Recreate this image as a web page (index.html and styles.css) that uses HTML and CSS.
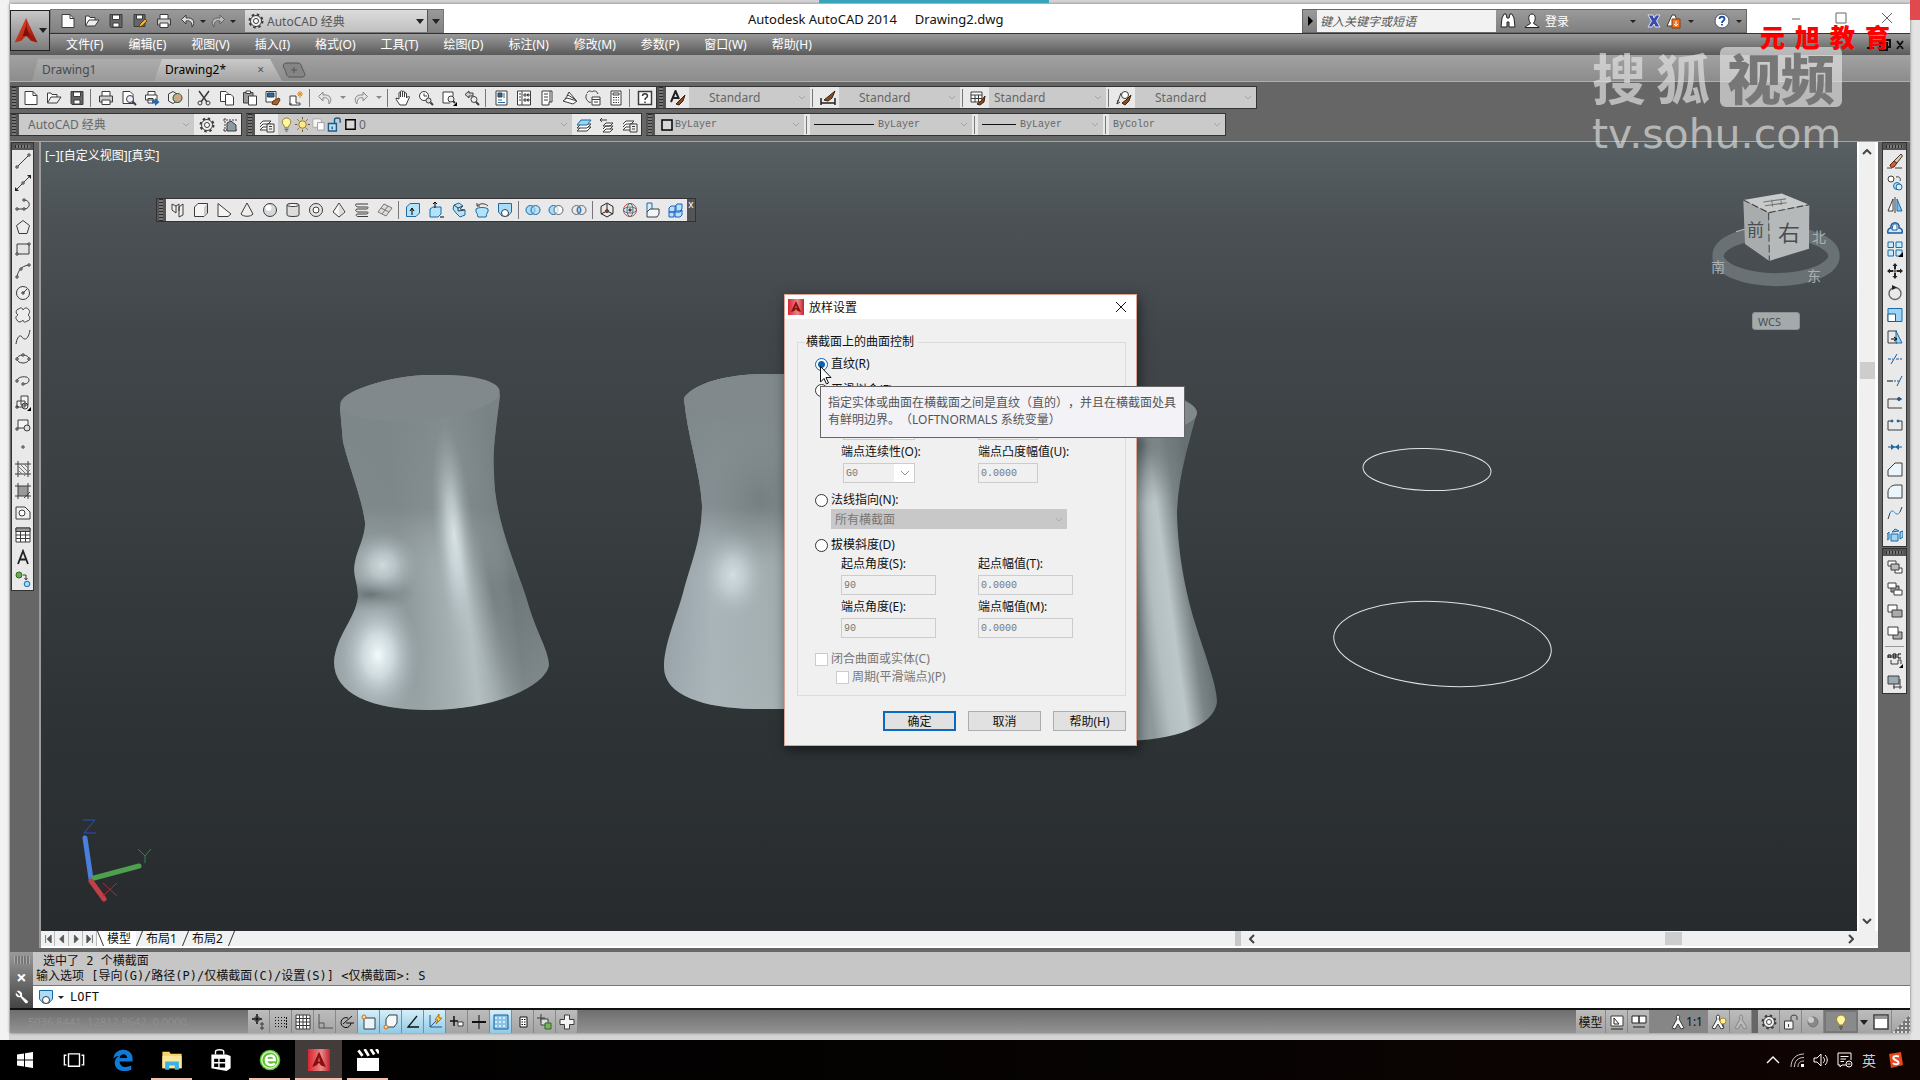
FILE: index.html
```
<!DOCTYPE html>
<html lang="zh-CN">

<head>
    <meta charset="UTF-8">
    <meta name="viewport" content="width=device-width, initial-scale=1.0">
    <title>Autodesk AutoCAD 2014 - Drawing2.dwg</title>
    <link rel="stylesheet" href="styles.css">
</head>

<body>
    <!-- icon sprite, all on a 16px grid -->
    <svg class="sprite" aria-hidden="true">
        <defs>
            <linearGradient id="gRed" x1="0" y1="0" x2="1" y2="1"><stop offset="0" stop-color="#f2502f"/><stop offset="1" stop-color="#8c1208"/></linearGradient>
            <linearGradient id="gTile" x1="0" y1="0" x2="1" y2="0"><stop offset="0" stop-color="#d9232e"/><stop offset=".6" stop-color="#e8898c"/><stop offset="1" stop-color="#c4202a"/></linearGradient>
        </defs>
        <symbol id="acad" viewBox="0 0 16 16"><path d="M8 0 15 15 11 14 8 11 5 14 1 15Z" fill="url(#gRed)" stroke="none"/><path d="M8 0 9 8 15 15 11 13 8 10Z" fill="#a0150c" stroke="none"/><path d="M6 11 8 5 10 11Z" fill="#7c0f08" stroke="none"/></symbol>
        <symbol id="acadTile" viewBox="0 0 16 16"><path d="M0 0H16V16H0Z" fill="url(#gTile)" stroke="none"/><path d="M8 2 13 13 9.500 12 8 10 6 12 3 13Z" fill="#8c0e0c" stroke="none"/><path d="M7 9 8 6 9 9Z" fill="#c86060" stroke="none"/></symbol>
        <symbol id="new" viewBox="0 0 16 16"><path d="M2 1.500H10L14 5.500V14.500H2Z" fill="#fff"/><path d="M10 1.500V5.500H14"/></symbol>
        <symbol id="open" viewBox="0 0 16 16"><path d="M1.500 13V3H5L6 4.500H11V7" fill="#fff"/><path d="M1.500 13 5 7H15L11 13Z" fill="#eee"/></symbol>
        <symbol id="save" viewBox="0 0 16 16"><path d="M2 1.500H14V14.500H3L2 13.500Z" fill="#666"/><path d="M4.500 2H11.500V6.500H4.500ZM5 10H11V14H5Z" fill="#fff"/></symbol>
        <symbol id="saveas" viewBox="0 0 16 16"><path d="M2 1.500H13V13.500H2Z" fill="#666"/><path d="M4.500 2H10.500V6H4.500Z" fill="#fff"/><path d="M7 14 8 11 13 6 15 8 10 13Z" fill="#f0b030" stroke="#704010"/></symbol>
        <symbol id="print" viewBox="0 0 16 16"><path d="M4 6V1.500H12V6" fill="#fff"/><path d="M1.500 6H14.500V12H1.500Z" fill="#ccc"/><path d="M4 10H12V14.500H4Z" fill="#fff"/></symbol>
        <symbol id="preview" viewBox="0 0 16 16"><path d="M2 1.500H9L12 4.500V13.500H2Z" fill="#fff"/><circle cx="9" cy="9" r="3.500" fill="#eef"/><path d="M11.500 11.500 15 15" stroke-width="2"/></symbol>
        <symbol id="publish" viewBox="0 0 16 16"><path d="M4 5V1.500H11V5M1.500 5H13V10H1.500ZM4 8.500H9V13H4Z" fill="#fff"/><path d="M8 10.500H11V8L15.500 12 11 16V13.500H8Z" fill="#2668b0" stroke="none"/></symbol>
        <symbol id="dwf" viewBox="0 0 16 16"><path d="M1.500 4 6 1.500 10 4V11L6 13.500 1.500 11Z" fill="#eee"/><circle cx="10.500" cy="8" r="4.500" fill="#a4bc7c"/><path d="M10 4C15 4 15 8 13 11L9 9Z" fill="#d8a088" stroke="none"/></symbol>
        <symbol id="cut" viewBox="0 0 16 16"><path d="M3 1 11 12M13 1 5 12" stroke-width="1.500"/><circle cx="4" cy="13" r="2"/><circle cx="12" cy="13" r="2"/></symbol>
        <symbol id="copy" viewBox="0 0 16 16"><path d="M1.500 1.500H7L9 3.500V11.500H1.500Z" fill="#fff"/><path d="M6.500 4.500H12L14.500 7V15H6.500Z" fill="#fff"/></symbol>
        <symbol id="paste" viewBox="0 0 16 16"><path d="M1.500 2.500H11V13H1.500Z" fill="#999"/><path d="M4 1H8.500V3.500H4Z" fill="#fff"/><path d="M6.500 6H14.500V15H6.500Z" fill="#fff"/></symbol>
        <symbol id="match" viewBox="0 0 16 16"><path d="M1 1.500H11V12H1Z" fill="#fff"/><path d="M2.500 3H9V7H2.500Z" fill="#246aa8"/><path d="M8 11 14 8 15 10 12 15 7 14Z" fill="#a8642c" stroke="#603010"/></symbol>
        <symbol id="block" viewBox="0 0 16 16"><path d="M2 6H8V13H12V15H2ZM1 14H4" fill="#fff"/><path d="M12 1V8M9 4H15M10 2 14 6M14 2 10 6" stroke="#e08a20"/></symbol>
        <symbol id="undo" viewBox="0 0 16 16"><path d="M6 2 1.500 6.500 6 11V8C10 7 12 9 12 14C16 9 13 4 6 5Z" fill="#ddd"/></symbol>
        <symbol id="redo" viewBox="0 0 16 16"><path d="M10 2 14.500 6.500 10 11V8C6 7 4 9 4 14C0 9 3 4 10 5Z" fill="#ddd"/></symbol>
        <symbol id="pan" viewBox="0 0 16 16"><path d="M5 15C3 12 1 10 1 8L4 9V3C4 2 5.500 2 5.500 3V7 1.500C5.500.500 7.500.500 7.500 1.500V7 2C7.500 1 9.500 1 9.500 2V7 3.500C10 2.500 11.500 2.500 11.500 4V8L13.500 6 14.500 7 11 15Z" fill="#fff"/></symbol>
        <symbol id="zoomrt" viewBox="0 0 16 16"><circle cx="6" cy="6" r="4.500" fill="#fff"/><path d="M6 3.500V6H9"/><circle cx="10.500" cy="10.500" r="2.500" fill="#dde"/><path d="M12.500 12.500 15 15" stroke-width="2"/></symbol>
        <symbol id="zoomwin" viewBox="0 0 16 16"><path d="M9 13H2V2H12V6" fill="#fff"/><circle cx="10" cy="9" r="3" fill="#eee"/><path d="M12 11 14 13" stroke-width="2"/><path d="M16 16H12L16 12Z" fill="#000" stroke="none"/></symbol>
        <symbol id="zoomprev" viewBox="0 0 16 16"><path d="M5 1 1 4.500 5 8V6H9V3H5Z" fill="#ccc"/><circle cx="10" cy="9.500" r="3" fill="#eee"/><path d="M12 12 15 15" stroke-width="2"/></symbol>
        <symbol id="props" viewBox="0 0 16 16"><path d="M3 1H14V15H3Z" fill="#fff"/><path d="M5 3H9V7H5Z" fill="#246aa8"/><path d="M11 3V8M5 10H9M5 12.500H12" stroke="#246aa8"/></symbol>
        <symbol id="dc" viewBox="0 0 16 16"><path d="M1.500 1H14.500V15H1.500ZM6 1V15" fill="#fff"/><path d="M3 4H5M3 7H5M3 10H5M8 4H10V6H8ZM11.500 4H13V6H11.500ZM8 9H10V11H8ZM11.500 9H13V11H11.500Z"/></symbol>
        <symbol id="palette" viewBox="0 0 16 16"><path d="M3 1H13V12H10V15H3Z" fill="#fff"/><path d="M5 4H9M5 7H9M5 10H9M11 1V12"/></symbol>
        <symbol id="sheet" viewBox="0 0 16 16"><path d="M1 11 5 8 15 11 11 14ZM3 9 6 5 14 10M5 6 7 2 13 9" fill="#fff"/></symbol>
        <symbol id="markup" viewBox="0 0 16 16"><path d="M2 3C4 0 6 1 7 2 9 0 12 1 13 4M2 4C0 6 1 10 3 11 3 12 5 13 6 12"/><path d="M7 7H15V15H7ZM7 9.500H15M9 12H13" fill="#fff"/></symbol>
        <symbol id="calc" viewBox="0 0 16 16"><path d="M3 1H13V15H3Z" fill="#fff"/><path d="M5 3H11V5H5Z"/><path d="M5 7.500H11M5 10H11M5 12.500H11" stroke-dasharray="1.500 1"/></symbol>
        <symbol id="help" viewBox="0 0 16 16"><path d="M1.500 1.500H14.500V14.500H1.500Z" fill="#fff" stroke-width="1.500"/><path d="M5.500 6C5.500 3 10.500 3 10.500 6 10.500 8 8 7.500 8 10M8 11.500V13" stroke-width="1.500"/></symbol>
        <symbol id="gear" viewBox="0 0 16 16"><circle cx="8" cy="8" r="5.500" fill="#eee"/><circle cx="8" cy="8" r="6.500" stroke-width="2" stroke-dasharray="2.500 2.600"/><circle cx="8" cy="8" r="2.500" fill="#fff"/></symbol>
        <symbol id="wsave" viewBox="0 0 16 16"><path d="M1 3H15M3 1V15M1 13H15" stroke-dasharray="2 1"/><path d="M5 14V6L9 4 14 8V14Z" fill="#8a9aa0"/></symbol>
        <symbol id="layers" viewBox="0 0 16 16"><path d="M1 13 4 10H12L9 13ZM1 10 4 7H12M1 7 4 4H12L9 7" fill="#fff"/><path d="M8 7H15V15H8ZM10 9.500H13M10 12H13" fill="#eee"/></symbol>
        <symbol id="layerblue" viewBox="0 0 16 16"><path d="M1 14 5 10H15L11 14Z" fill="#fff"/><path d="M1 11 5 7H15L11 11Z" fill="#fff"/><path d="M1 8 5 3H15L11 8Z" fill="#9cd4f4" stroke="#1b6aa5"/></symbol>
        <symbol id="layerprev" viewBox="0 0 16 16"><path d="M4 15 7 12H14L11 15ZM4 12 7 9H14L11 12M4 9 7 6H14L11 9Z" fill="#fff"/><path d="M1 3H8M3 1 1 3 3 5"/></symbol>
        <symbol id="bulb" viewBox="0 0 16 16"><path d="M6 11C6 9 3.500 8 3.500 5.500A4.500 4.500 0 0 1 12.500 5.500C12.500 8 10 9 10 11Z" fill="#fff6a0" stroke="#907c30"/><path d="M6 13H10M7 15H9"/></symbol>
        <symbol id="sun" viewBox="0 0 16 16"><circle cx="8" cy="8" r="4" fill="#ffe888" stroke="#907030"/><path d="M8 0V2.500M8 13.500V16M0 8H2.500M13.500 8H16M2.500 2.500 4 4M12 12 13.500 13.500M13.500 2.500 12 4M4 12 2.500 13.500" stroke="#705820"/></symbol>
        <symbol id="vpfreeze" viewBox="0 0 16 16"><path d="M2 2H11V11H2Z" fill="#f4f4f4" stroke="#aaa"/><path d="M7 6H14V14H7Z" fill="#fff" stroke="#999"/></symbol>
        <symbol id="unlock" viewBox="0 0 16 16"><path d="M1.500 7H10V15H1.500Z" fill="#b4e0fa" stroke="#1b5a8a" stroke-width="1.500"/><path d="M8 7V3C8 .500 14 .500 14 3V6M5.500 10V13" stroke="#1b5a8a" stroke-width="1.500"/></symbol>
        <symbol id="lock" viewBox="0 0 16 16"><path d="M1.500 7H10V15H1.500Z" fill="#f4f4f4"/><path d="M8 7V3C8 .500 14 .500 14 3V6M5.500 10V13"/></symbol>
        <symbol id="swatch" viewBox="0 0 16 16"><path d="M3 3H13V13H3Z" fill="#d8d8d8" stroke="#000" stroke-width="1.500"/></symbol>
        <symbol id="textstyle" viewBox="0 0 16 16"><path d="M1 12 5.500 1 9 9M3 8H8" stroke="#222" stroke-width="2"/><path d="M6 14 10 10 15 5 13 11 9 15Z" fill="#8a4a1c" stroke="#402008"/></symbol>
        <symbol id="dimstyle" viewBox="0 0 16 16"><path d="M1 8V15M15 8V15M1 13H15" stroke="#222" stroke-width="1.500"/><path d="M4 10 9 6 15 1 12 8 8 11Z" fill="#8a4a1c" stroke="#402008"/></symbol>
        <symbol id="tabstyle" viewBox="0 0 16 16"><path d="M1 2H12V12H1ZM1 5H12M1 8.500H12M5 5V12M8.500 5V12" fill="#fff"/><path d="M7 14 11 11 15 6 14 12 10 15Z" fill="#8a4a1c" stroke="#402008"/></symbol>
        <symbol id="mlstyle" viewBox="0 0 16 16"><path d="M1 14 5 3M1 14 2 10M1 14 4 12"/><circle cx="9" cy="5" r="3.500" fill="#fff"/><path d="M6 13 10 10 15 5 13 11 9 15Z" fill="#8a4a1c" stroke="#402008"/></symbol>
        <!-- draw -->
        <symbol id="line" viewBox="0 0 16 16"><path d="M2 14 14 2"/><path d="M1 13H3V15H1ZM13 1H15V3H13Z" fill="#fff"/></symbol>
        <symbol id="xline" viewBox="0 0 16 16"><path d="M1 15 15 1"/><path d="M0 16V12L4 16ZM16 0V4L12 0Z" fill="#222" stroke="none"/><path d="M7 7H9V9H7Z" fill="#fff"/></symbol>
        <symbol id="pline" viewBox="0 0 16 16"><path d="M2 12H9C16 12 16 3 9 3"/><path d="M1 11H3V13H1ZM8 11H10V13H8ZM8 2H10V4H8Z" fill="#fff"/></symbol>
        <symbol id="polygon" viewBox="0 0 16 16"><path d="M8 1.500 14.500 6.500 12 14.500H4L1.500 6.500Z" fill="#ececec"/></symbol>
        <symbol id="rect" viewBox="0 0 16 16"><path d="M2 3H14V13H2Z" fill="#e4e4e4"/><path d="M1 12H3V14H1ZM13 2H15V4H13Z" fill="#fff"/></symbol>
        <symbol id="arc" viewBox="0 0 16 16"><path d="M2 14C3 8 6 3 14 2"/><path d="M1 13H3V15H1ZM5 5H7V7H5ZM13 1H15V3H13Z" fill="#fff"/></symbol>
        <symbol id="circle" viewBox="0 0 16 16"><circle cx="8" cy="8" r="6.500" fill="#eee"/><path d="M8 8 12 4M7 7H9V9H7Z"/></symbol>
        <symbol id="revcloud" viewBox="0 0 16 16"><path d="M3 8C0 6 1 2 4 2 5 0 8 1 8 3 9 1 12 0 13 2 16 4 14 7 13 8 16 10 15 14 12 14 10 16 8 15 8 13 7 15 3 16 2 13 0 11 1 9 3 8Z" fill="#eee"/></symbol>
        <symbol id="spline" viewBox="0 0 16 16"><path d="M1 15C2 8 5 5 7 8S13 12 15 1"/></symbol>
        <symbol id="ellipse" viewBox="0 0 16 16"><ellipse cx="8" cy="8" rx="6" ry="4"/><path d="M1 7H3V9H1ZM13 7H15V9H13ZM7 3H9V5H7Z" fill="#fff"/></symbol>
        <symbol id="earc" viewBox="0 0 16 16"><path d="M2 8C2 3 14 2 14 7 14 10 11 11 8 11"/><path d="M1 7H3V9H1ZM7 10H9V12H7Z" fill="#fff"/></symbol>
        <symbol id="insert" viewBox="0 0 16 16"><path d="M6 1H13V10H6ZM2 6H10V12H2Z" fill="#f4f4f4"/><circle cx="10" cy="11" r="3"/><path d="M1 11H3V13H1Z"/><path d="M16 16H12L16 12Z" fill="#000" stroke="none"/></symbol>
        <symbol id="mkblock" viewBox="0 0 16 16"><path d="M3 3H13V11H3Z" fill="#f4f4f4"/><circle cx="12" cy="11" r="3" fill="#ddd"/><path d="M1 11H3V13H1Z"/></symbol>
        <symbol id="point" viewBox="0 0 16 16"><path d="M7 7H9V9H7Z" fill="#fff"/></symbol>
        <symbol id="hatch" viewBox="0 0 16 16"><path d="M3 0V16M13 0V16M0 3H16M0 13H16"/><path d="M3 5 11 13M3 9 7 13M5 3 13 11M9 3 13 7M9 15 15 9" stroke="#777"/></symbol>
        <symbol id="gradient" viewBox="0 0 16 16"><path d="M3 3H13V13H3Z" fill="#999" stroke="none"/><path d="M3 0V16M13 0V16M0 3H16M0 13H16M9 15 15 9"/></symbol>
        <symbol id="region" viewBox="0 0 16 16"><path d="M1 2H10L15 7V14H1Z" fill="#f0f0f0"/><circle cx="7" cy="8" r="3" fill="#fff"/></symbol>
        <symbol id="table" viewBox="0 0 16 16"><path d="M1 1H15V15H1ZM1 8H15M1 11.500H15M5.500 4.500V15M10.500 4.500V15" fill="#fff"/><path d="M1 1H15V4.500H1Z" fill="#999"/></symbol>
        <symbol id="mtext" viewBox="0 0 16 16"><path d="M3 15 8 2 13 15M5 10.500H11" stroke="#222" stroke-width="1.800"/></symbol>
        <symbol id="addsel" viewBox="0 0 16 16"><circle cx="4" cy="4" r="3" fill="#6cae4c" stroke="#2c6a24"/><circle cx="12" cy="13" r="2.800" fill="#9cdcfc" stroke="#1b6aa5"/><path d="M8 4H11V8M9.500 7 11 9 12.500 7"/></symbol>
        <!-- modelling -->
        <symbol id="polysolid" viewBox="0 0 16 16"><path d="M2 2 6 4V11L2 8ZM6 4 9 2V9M9 5 13 2V13L9 15Z" fill="#eee"/></symbol>
        <symbol id="box" viewBox="0 0 16 16"><path d="M1.500 5 5 1.500H14.500V11L11 14.500H1.500Z" fill="#f4f4f4"/><path d="M14 2 11 5V14L14 11Z" fill="#ccc" stroke="none"/></symbol>
        <symbol id="wedge" viewBox="0 0 16 16"><path d="M2 1.500 15 12 12 14.500H2Z" fill="#f4f4f4"/></symbol>
        <symbol id="cone" viewBox="0 0 16 16"><path d="M8 1 14 12C12 15 4 15 2 12Z" fill="#eee"/></symbol>
        <symbol id="sphere" viewBox="0 0 16 16"><circle cx="8" cy="8" r="6.500" fill="#d4d8d8"/><circle cx="6.500" cy="6" r="3" fill="#fff" stroke="none"/></symbol>
        <symbol id="cyl" viewBox="0 0 16 16"><path d="M2 3C2 1 14 1 14 3V13C14 15 2 15 2 13Z" fill="#ddd"/><ellipse cx="8" cy="3" rx="6" ry="1.500" fill="#fff"/></symbol>
        <symbol id="torus" viewBox="0 0 16 16"><circle cx="8" cy="8" r="6.500" fill="#e4e4e4"/><circle cx="8" cy="8" r="3" fill="#fff"/></symbol>
        <symbol id="pyramid" viewBox="0 0 16 16"><path d="M8 1 14 10 8 15 2 10Z" fill="#f8f8f8"/><path d="M8 2 13 10 8 14Z" fill="#ddd" stroke="none"/></symbol>
        <symbol id="helix" viewBox="0 0 16 16"><path d="M14 2H3C0 2 2 5 4 5H12C16 5 14 7 12 7H4C0 7 2 10 4 10H12C16 10 14 12 12 12H4C1 12 2 14.500 4 14.500H14"/></symbol>
        <symbol id="planar" viewBox="0 0 16 16"><path d="M1 10 7 2 15 6 9 14ZM4 6 12 10M11 4 5 12" fill="#ddd" stroke="#777"/></symbol>
        <symbol id="extrude" viewBox="0 0 16 16"><path d="M1.500 5 5 1.500H14.500V11L11 14.500H1.500Z" fill="#b4e2f8" stroke="#1b6aa5"/><path d="M7 13V7M5 9 7 6 9 9" stroke="#000"/></symbol>
        <symbol id="presspull" viewBox="0 0 16 16"><path d="M2 7 5 5H13V12L10 15H2Z" fill="#b4e2f8" stroke="#1b6aa5"/><path d="M7 6V0M5 2 7 0 9 2M12 15H16" stroke="#000"/></symbol>
        <symbol id="sweep" viewBox="0 0 16 16"><path d="M3 3 8 1 12 4 9 7 14 8V13L9 15 5 11 2 7Z" fill="#b4e2f8" stroke="#1b6aa5"/><path d="M3 3 7 6 12 4M7 6V9L14 8"/></symbol>
        <symbol id="revolve" viewBox="0 0 16 16"><path d="M2 7C4 5 12 5 14 7V10C12 11 13 14 12 15H4C3 14 4 11 2 10Z" fill="#b4e2f8" stroke="#1b6aa5"/><path d="M3 4C6 1 11 1 14 4M3 1V4H6"/></symbol>
        <symbol id="loft" viewBox="0 0 16 16"><path d="M1.500 1.500H14.500V10L11 14H5L1.500 10Z" fill="#a8dcf8" stroke="#1b6aa5"/><circle cx="8" cy="11" r="3.500" fill="#fff"/></symbol>
        <symbol id="union" viewBox="0 0 16 16"><circle cx="5.500" cy="8" r="4.500" fill="#a8dcf8" stroke="#1b6aa5"/><circle cx="10.500" cy="8" r="4.500" fill="#a8dcf8" stroke="#1b6aa5" fill-opacity=".6"/></symbol>
        <symbol id="subtract" viewBox="0 0 16 16"><circle cx="5.500" cy="8" r="4.500" fill="#a8dcf8" stroke="#1b6aa5"/><circle cx="10.500" cy="8" r="4.500" fill="#fff" stroke="#666" fill-opacity=".7"/></symbol>
        <symbol id="intersect" viewBox="0 0 16 16"><circle cx="5.500" cy="8" r="4.500" stroke="#667"/><circle cx="10.500" cy="8" r="4.500" stroke="#667"/><path d="M8 4.500C10 7 10 9 8 11.500 6 9 6 7 8 4.500Z" fill="#a8dcf8" stroke="#1b6aa5"/></symbol>
        <symbol id="orbit3d" viewBox="0 0 16 16"><path d="M8 1 14 4.500V11.500L8 15 2 11.500V4.500Z" stroke="#222"/><path d="M8 2V9L2 12M8 9 14 12" stroke="#222"/><circle cx="8" cy="9" r="1.500" fill="#d03020"/></symbol>
        <symbol id="rot3d" viewBox="0 0 16 16"><circle cx="8" cy="8" r="6.500" stroke="#c04040"/><ellipse cx="8" cy="8" rx="3" ry="6.500" stroke="#3a7a5a"/><ellipse cx="8" cy="8" rx="6.500" ry="3" stroke="#5a6aa0"/><path d="M7 7H9V9H7Z" fill="#d03020"/></symbol>
        <symbol id="align3d" viewBox="0 0 16 16"><path d="M2 1H7V10H2Z" fill="#d4ecf8" stroke="#1b6aa5"/><path d="M2 10 5 7H14V12L12 15H2Z" fill="#eef6fa"/></symbol>
        <symbol id="array3d" viewBox="0 0 16 16"><path d="M1 6 3 4H8V8L6 10H1ZM7 5 9 2H14V7L12 9H7ZM1 12V10H6V15H1ZM7 10H12L14 8V13L12 15H7Z" fill="#b4e2f8" stroke="#1e5fc0"/></symbol>
        <!-- modify -->
        <symbol id="erase" viewBox="0 0 16 16"><path d="M3 12 7 8 10 10 7 14C5 15 3 14 3 12Z" fill="#c8603c" stroke="#602010"/><path d="M7 8 14 1 15.500 3 10 10Z" fill="#e8c890"/><path d="M0 15H5M8 15H15"/></symbol>
        <symbol id="cp" viewBox="0 0 16 16"><circle cx="4" cy="4" r="3" fill="#fff"/><circle cx="10" cy="11" r="3.500" fill="#b4e2f8" stroke="#1b6aa5"/><circle cx="12" cy="12" r="3" fill="#d4f0fc" stroke="#1b6aa5"/><path d="M9 2C13 1 14 4 13 6"/></symbol>
        <symbol id="mirror" viewBox="0 0 16 16"><path d="M6 2V14H1Z" fill="#fff"/><path d="M10 2V14H15Z" fill="#7cc4f0" stroke="#1b6aa5"/><path d="M8 0V16"/></symbol>
        <symbol id="offset" viewBox="0 0 16 16"><path d="M1 14C0 10 3 9 4 9 3 2 13 2 12 9 14 9 16 11 15 14Z" fill="#cceafa" stroke="#1b5a9a" stroke-width="1.500"/><path d="M5 11C6 6 6 5 8 5S10 7 10 11Z" fill="#fff" stroke="#1b5a9a"/></symbol>
        <symbol id="array" viewBox="0 0 16 16"><path d="M1 1H6.500V6.500H1ZM9 1H15V6.500H9ZM1 9H6.500V15H1ZM9 9H15V15H9Z" fill="#cceafa" stroke="#1b6aa5"/><path d="M16 16H11L16 11Z" fill="#000" stroke="none"/></symbol>
        <symbol id="move" viewBox="0 0 16 16"><path d="M8 0 10.500 3H5.500ZM8 16 10.500 13H5.500ZM0 8 3 5.500V10.500ZM16 8 13 5.500V10.500Z" fill="#222" stroke="none"/><path d="M8 3V6M8 10V13M3 8H6M10 8H13" stroke="#222" stroke-width="2"/><path d="M7 7H9V9H7Z"/></symbol>
        <symbol id="rotate" viewBox="0 0 16 16"><circle cx="8" cy="8.500" r="6" stroke="#666" stroke-width="1.400"/><path d="M5 0 10 2.500 5 5Z" fill="#222" stroke="none"/></symbol>
        <symbol id="scale" viewBox="0 0 16 16"><path d="M1 1.500H15V14.500H1Z" fill="#9cd4f4" stroke="#1b6aa5"/><path d="M1 7H8.500V14.500H1Z" fill="#fff" stroke="#1b5a8a"/></symbol>
        <symbol id="stretch" viewBox="0 0 16 16"><path d="M9 2 15 14H9Z" fill="#9cd4f4" stroke="#1b6aa5"/><path d="M10 2H1V14H10"/><path d="M4 10H9M7 8 10 10 7 12" stroke="#000"/></symbol>
        <symbol id="trim" viewBox="0 0 16 16"><path d="M1 8H6M9 8H15" stroke="#1b5a9a" stroke-dasharray="3 1"/><path d="M4 13 10 3" stroke="#1b5a9a"/></symbol>
        <symbol id="extend" viewBox="0 0 16 16"><path d="M0 8H6" stroke="#111"/><path d="M7 8H12" stroke="#1b5a9a" stroke-dasharray="2 1"/><path d="M10 13 15 3" stroke="#1b5a9a"/></symbol>
        <symbol id="breakpt" viewBox="0 0 16 16"><path d="M15 13H1V4H15"/><circle cx="12" cy="4" r="1.500" fill="#1b5a9a" stroke="#1b5a9a"/></symbol>
        <symbol id="brk" viewBox="0 0 16 16"><path d="M4 4H1V13H15V4H12"/><circle cx="5" cy="4" r="1" fill="#1b5a9a" stroke="#1b5a9a"/><circle cx="11" cy="4" r="1" fill="#1b5a9a" stroke="#1b5a9a"/></symbol>
        <symbol id="join" viewBox="0 0 16 16"><path d="M1 8H15" stroke="#1b5a9a"/><path d="M4 5 8 8 4 11ZM12 5 8 8 12 11Z" fill="#1b6aa5" stroke="none"/></symbol>
        <symbol id="chamfer" viewBox="0 0 16 16"><path d="M1 15V9L8 2H15V15Z" fill="#eaf6fc"/></symbol>
        <symbol id="fillet" viewBox="0 0 16 16"><path d="M1 15V9C1 5 5 2 9 2H15V15Z" fill="#eaf6fc"/></symbol>
        <symbol id="blend" viewBox="0 0 16 16"><path d="M1 14 3 8M13 7 15 2"/><path d="M3 8C6 1 9 14 13 7" stroke="#2b8ad0"/></symbol>
        <symbol id="explode" viewBox="0 0 16 16"><path d="M4 7H11V14H4ZM5 5 8 2 12 4ZM13 5 16 4V10L13 12ZM0 7 2 5V12L0 13Z" fill="#9cd4f4" stroke="#1b6aa5"/></symbol>
        <symbol id="front" viewBox="0 0 16 16"><path d="M1 2H9V7H1ZM8 9H15V14H8Z" fill="#fff"/><path d="M4 5H12V11H4Z" fill="#bbb"/></symbol>
        <symbol id="back" viewBox="0 0 16 16"><path d="M4 5H12V11H4Z" fill="#999"/><path d="M1 2H9V7H1ZM7 9H15V14H7Z" fill="#fff"/></symbol>
        <symbol id="above" viewBox="0 0 16 16"><path d="M1 2H10V9H1Z" fill="#fff"/><path d="M5 7H15V14H5Z" fill="#aaa"/></symbol>
        <symbol id="under" viewBox="0 0 16 16"><path d="M6 7H15V14H6Z" fill="#aaa"/><path d="M1 2H11V10H1Z" fill="#fff"/></symbol>
        <symbol id="anno" viewBox="0 0 16 16"><path d="M1 6V3H4V6M1 5H4M6 2V6H9V2H6M6 4H9M14 2H11V6H14" stroke="#000"/><path d="M4 8V12H11V8H14V12"/><path d="M16 16H12L16 12Z" fill="#000" stroke="none"/></symbol>
        <symbol id="hatchback" viewBox="0 0 16 16"><path d="M1 2H12V10H1Z" fill="#9aabb4"/><path d="M6 13H15M13 5V15M7 10V15"/></symbol>
        <!-- status bar -->
        <symbol id="infer" viewBox="0 0 16 16"><path d="M6 0V10M1 5H11" stroke="#111" stroke-width="1.500"/><path d="M4 3H8V7H4ZM10 9H12V11H10ZM10 13H12V15H10Z"/></symbol>
        <symbol id="snap" viewBox="0 0 16 16"><path d="M2 3.500H12M2 6.500H12M2 9.500H12M2 12.500H14" stroke="#111" stroke-dasharray="1 2"/><path d="M13.500 3V14" stroke="#111" stroke-dasharray="2 1"/></symbol>
        <symbol id="grid" viewBox="0 0 16 16"><path d="M1 1H15V15H1ZM1 4.500H15M1 8H15M1 11.500H15M4.500 1V15M8 1V15M11.500 1V15" fill="#fff"/></symbol>
        <symbol id="ortho" viewBox="0 0 16 16"><path d="M2 0V14H16M2 9H7V14" stroke="#555"/></symbol>
        <symbol id="polar" viewBox="0 0 16 16"><path d="M12 9A5 5 0 1 1 9 4M4 10 13 2M7 9H15" stroke="#111"/></symbol>
        <symbol id="osnap" viewBox="0 0 16 16"><path d="M3 4H14V15H3Z" fill="#e8f6fc"/><circle cx="3" cy="3" r="2" fill="#ffd8a0" stroke="#d06a20"/></symbol>
        <symbol id="osnap3" viewBox="0 0 16 16"><path d="M3 5 6 1H14V9L11 13H3Z" fill="#f4fafc"/><circle cx="3" cy="13" r="2" fill="#ffd8a0" stroke="#d06a20"/></symbol>
        <symbol id="otrack" viewBox="0 0 16 16"><path d="M12 2 3 13H14" stroke="#111" stroke-width="1.300"/></symbol>
        <symbol id="ducs" viewBox="0 0 16 16"><path d="M3 1V13H15M3 13 9 7" stroke="#1b5a8a"/><path d="M12 0 8 6H11L9 10 15 4H12Z" fill="#ffd040" stroke="#b07010"/></symbol>
        <symbol id="dyn" viewBox="0 0 16 16"><path d="M5 2V12M1 7H9" stroke="#111" stroke-width="1.500"/><path d="M9 8H14V12H9Z" fill="#fff"/></symbol>
        <symbol id="lwt" viewBox="0 0 16 16"><path d="M8 1V15" stroke="#111"/><path d="M1 8H15" stroke="#111" stroke-width="2"/></symbol>
        <symbol id="tpy" viewBox="0 0 16 16"><path d="M1 1H15V15H1Z" fill="#8cc4e8" stroke="#1b5a9a"/><path d="M2 4H14M2 8H14M2 12H14" stroke="#d4ecfa" stroke-width="2" stroke-dasharray="2 2"/></symbol>
        <symbol id="qp" viewBox="0 0 16 16"><path d="M5 3H12V13H5Z" fill="#fff" stroke="#111"/><path d="M6.500 5.500H10.500M6.500 8H10.500M6.500 10.500H10.500" stroke="#111" stroke-dasharray="1.500 1"/></symbol>
        <symbol id="sc" viewBox="0 0 16 16"><path d="M4 0V8M0 4H8"/><path d="M4 5H11V11H4Z" fill="#ddd"/><path d="M8 9H14V15H8Z" fill="#7cb060" stroke="#2c6a24"/></symbol>
        <symbol id="plus" viewBox="0 0 16 16"><path d="M5.500 1H10.500V5.500H15V10.500H10.500V15H5.500V10.500H1V5.500H5.500Z" fill="#f4f4f4"/></symbol>
        <symbol id="paper" viewBox="0 0 16 16"><path d="M2 2H14V12H2Z" fill="#fff"/><path d="M5 4V10H10ZM2 15H14" stroke="#222"/></symbol>
        <symbol id="views" viewBox="0 0 16 16"><path d="M1 2H8V9H1ZM8 2H15V9H8ZM2 13H14" fill="#fff" stroke="#222"/></symbol>
        <symbol id="person" viewBox="0 0 16 16"><path d="M8 1C10 1 10 4 9 5L14 14 11 15 8 10 5 15 2 14 7 5C6 4 6 1 8 1Z" fill="#f8f8f8"/></symbol>
        <symbol id="personb" viewBox="0 0 16 16"><path d="M7 1C9 1 9 4 8 5L13 14 10 15 7 10 4 15 1 14 6 5C5 4 5 1 7 1Z" fill="#f8f8f8"/><circle cx="12" cy="7" r="3" fill="#fff090" stroke="#a08830"/><path d="M12 10V13"/></symbol>
        <symbol id="persong" viewBox="0 0 16 16"><path d="M8 1C10 1 10 4 9 5L14 14 11 15 8 10 5 15 2 14 7 5C6 4 6 1 8 1Z" fill="#bbb" stroke="#888"/></symbol>
        <symbol id="isolate" viewBox="0 0 16 16"><circle cx="8" cy="8" r="5" fill="#888" stroke="#777"/><circle cx="6" cy="6" r="3" fill="#ccc" stroke="none"/></symbol>
        <symbol id="clean" viewBox="0 0 16 16"><path d="M1 1H15V15H1Z" fill="#fff" stroke-width="1.500"/><path d="M2 2H14V5H2Z" fill="#999" stroke="none"/></symbol>
        <symbol id="wrench" viewBox="0 0 16 16"><path d="M2 1 6 5 5 7 1 3C0 6 3 9 6 8L12 15C14 16 16 14 14 12L8 7C9 3 6 0 2 1Z" fill="#fff" stroke="none"/></symbol>
        <!-- info center -->
        <symbol id="binoc" viewBox="0 0 16 16"><path d="M2 5 4 1H6L7 5H9L10 1H12L14 5 15 14H9V9H7V14H1Z" fill="#fff" stroke="#222"/></symbol>
        <symbol id="user" viewBox="0 0 16 16"><path d="M8 1C12 1 12 7 9.500 10 10 12 14 12 15 14.500H1C2 12 6 12 6.500 10 4 7 4 1 8 1Z" fill="#fff" stroke="#222"/></symbol>
        <symbol id="exchange" viewBox="0 0 16 16"><path d="M2 2H7L8 5 10 2H14L10.500 8 14 14H9L8 11 6 14H2L5.500 8Z" fill="#3a4cb0" stroke="#dde"/></symbol>
        <symbol id="a360" viewBox="0 0 16 16"><path d="M1 13 6 2H9L13 13Z" fill="#fff"/><path d="M6 6H14V15H6Z" fill="#f07820" stroke="#903808"/><path d="M10 8V12M8 11 10 13 12 11" stroke="#fff"/></symbol>
        <symbol id="helpc" viewBox="0 0 16 16"><circle cx="8" cy="8" r="7" fill="#fff" stroke="#456"/><path d="M5.500 6C5.500 3 10.500 3 10.500 6 10.500 8 8 7.500 8 10M8 11V12.500" stroke="#1b4aa0" stroke-width="1.800"/></symbol>
        <!-- taskbar -->
        <symbol id="win" viewBox="0 0 16 16"><path d="M0 2.500 7 1.500V7.500H0ZM8 1.300 16 0V7.500H8ZM0 8.500H7V14.500L0 13.500ZM8 8.500H16V16L8 14.700Z" fill="#fff" stroke="none"/></symbol>
        <symbol id="tview" viewBox="0 0 16 16"><path d="M4 3.500H12V12.500H4ZM2.500 4.500H1V11.500H2.500M13.500 4.500H15V11.500H13.500" stroke="#fff"/></symbol>
        <symbol id="edge" viewBox="0 0 16 16"><path d="M1 7C2-2 15-1 15 7V9H5.500C6 14 11 13.500 14 12V15C8 17.500 2 15.500 2 10 2 8 3 6 5 5 3 5 2 6 1 7ZM5.500 6.500H11C11 3 6 3 5.500 6.500Z" fill="#0f7ad8" stroke="none"/></symbol>
        <symbol id="folder" viewBox="0 0 16 16"><path d="M1 2H6L7 3.500H15V14H1Z" fill="#f8d468" stroke="none"/><path d="M1 5H15V14H1Z" fill="#fce69c" stroke="none"/><path d="M3 15V9H13V15H10V12H6V15Z" fill="#38b4e4" stroke="none"/></symbol>
        <symbol id="store" viewBox="0 0 16 16"><path d="M1 4H12L15 5V14L12 16 1 14Z" fill="#fff" stroke="none"/><path d="M4 4V2C4 0 10 0 10 2V4" stroke="#fff"/><path d="M3 7H6V9.500H3ZM7 7H11V9.500H7ZM3 10.500H6V13H3ZM7 10.500H11V13.500H7Z" fill="#000" stroke="none"/></symbol>
        <symbol id="browser" viewBox="0 0 16 16"><circle cx="8" cy="8" r="7.500" fill="#5cc030" stroke="none"/><circle cx="8" cy="8" r="6" stroke="#d8f4c4"/><path d="M4.500 8H11.500C11 3.500 5 4 5 8 5 12 9.500 12.500 11.500 10.500" stroke="#fff" stroke-width="1.800"/></symbol>
        <symbol id="clap" viewBox="0 0 16 16"><path d="M0 6.500H16V16H0Z" fill="#fff" stroke="none"/><path d="M1 1 4 5M5.500 0 8.500 5M10 0 12.500 4M14 0 16 3" stroke="#fff" stroke-width="2"/></symbol>
        <symbol id="up" viewBox="0 0 16 16"><path d="M2 11 8 5 14 11" stroke="#fff" stroke-width="1.400"/></symbol>
        <symbol id="wifi" viewBox="0 0 16 16"><path d="M2 15C2 7 7 2 15 2M5.500 15C5.500 9 9 5.500 15 5.500M9 15C9 11 11 9 15 9" stroke="#ccc"/><path d="M12 12H15V15H12Z" fill="#fff" stroke="none"/></symbol>
        <symbol id="vol" viewBox="0 0 16 16"><path d="M1 6H4L8 2V14L4 10H1ZM10 5C12 7 12 9 10 11M12 3C15 6 15 10 12 13" stroke="#fff"/></symbol>
        <symbol id="notif" viewBox="0 0 16 16"><path d="M9 13H5L3 15V13H1V1H14V8M3.500 4.500H11.500M3.500 7H9M3.500 9.500H7" stroke="#fff"/><circle cx="12" cy="12" r="3" stroke="#fff"/><path d="M10.500 12H13.500" stroke="#fff"/></symbol>
        <symbol id="sogou" viewBox="0 0 16 16"><path d="M1 2 13 0 15 13 3 16Z" fill="#e8481c" stroke="none"/><path d="M11 4.500C7 3 4 5 6 7S11 9 10.500 11 6 12.500 5 11" stroke="#fff" stroke-width="2"/></symbol>
    </svg>

    <div class="desktop">
        <div class="app">
            <header class="top">
                <button class="logo" aria-label="应用程序菜单"><svg><use href="#acad"/></svg><i class="caret"></i></button>
                <div class="titlebar">
                    <div class="qat">
                        <button><svg><use href="#new"/></svg></button>
                        <button><svg><use href="#open"/></svg></button>
                        <button><svg><use href="#save"/></svg></button>
                        <button><svg><use href="#saveas"/></svg></button>
                        <button><svg><use href="#print"/></svg></button>
                        <button><svg><use href="#undo"/></svg></button><i class="caret small"></i>
                        <button class="dim"><svg><use href="#redo"/></svg></button><i class="caret small"></i>
                        <span class="qat-ws"><svg><use href="#gear"/></svg><select aria-label="工作空间"><option>AutoCAD 经典</option></select><i class="caret"></i></span>
                        <button class="qat-more"><i class="caret"></i></button>
                    </div>
                    <h1><span>Autodesk AutoCAD 2014</span><span>Drawing2.dwg</span></h1>
                    <div class="info">
                        <button class="info-arrow"><i class="caret right"></i></button>
                        <input type="text" placeholder="键入关键字或短语" aria-label="搜索">
                        <button><svg><use href="#binoc"/></svg></button>
                        <button class="login"><svg><use href="#user"/></svg>登录</button>
                        <i class="caret small"></i>
                        <button><svg><use href="#exchange"/></svg></button>
                        <button><svg><use href="#a360"/></svg></button><i class="caret small"></i>
                        <button class="info-help"><svg><use href="#helpc"/></svg></button><i class="caret small"></i>
                    </div>
                    <div class="winbtns">
                        <button aria-label="最小化"><svg viewBox="0 0 12 12"><path d="M2 7H10"/></svg></button>
                        <button aria-label="最大化"><svg viewBox="0 0 12 12"><path d="M1 1H11V11H1Z"/></svg></button>
                        <button aria-label="关闭"><svg viewBox="0 0 12 12"><path d="M1 1 11 11M11 1 1 11"/></svg></button>
                    </div>
                </div>
                <nav class="menubar">
                    <a href="#">文件(F)</a><a href="#">编辑(E)</a><a href="#">视图(V)</a><a href="#">插入(I)</a><a href="#">格式(O)</a><a href="#">工具(T)</a><a href="#">绘图(D)</a><a href="#">标注(N)</a><a href="#">修改(M)</a><a href="#">参数(P)</a><a href="#">窗口(W)</a><a href="#">帮助(H)</a>
                    <svg class="mdi" viewBox="0 0 40 12"><path d="M1 9H8M14 4H21V11H14ZM17 4V1H24V8H21M31 2 37 10M37 2 31 10"/></svg>
                </nav>
            </header>

            <div class="filetabs">
                <a class="ftab" href="#">Drawing1</a>
                <a class="ftab active" href="#">Drawing2*<span class="x">×</span></a>
                <button class="newtab" aria-label="新图形"><svg viewBox="0 0 24 16"><path d="M5 1H16C20 1 19 5 22 10 24 14 22 15 19 15H8C4 15 5 11 2 6 0 3 2 1 5 1Z"/><path d="M12 5V11M9 8H15"/></svg></button>
            </div>

            <div class="toolrows">
                <div class="toolrow">
                    <div class="bar"><i class="grip"></i>
                        <button><svg><use href="#new"/></svg></button><button><svg><use href="#open"/></svg></button><button><svg><use href="#save"/></svg></button><i class="sep"></i>
                        <button><svg><use href="#print"/></svg></button><button><svg><use href="#preview"/></svg></button><button><svg><use href="#publish"/></svg></button><button><svg><use href="#dwf"/></svg></button><i class="sep"></i>
                        <button><svg><use href="#cut"/></svg></button><button><svg><use href="#copy"/></svg></button><button><svg><use href="#paste"/></svg></button><button><svg><use href="#match"/></svg></button><button><svg><use href="#block"/></svg></button><i class="sep"></i>
                        <button class="dim"><svg><use href="#undo"/></svg></button><i class="drop"></i><button class="dim"><svg><use href="#redo"/></svg></button><i class="drop"></i><i class="sep"></i>
                        <button><svg><use href="#pan"/></svg></button><button><svg><use href="#zoomrt"/></svg></button><button><svg><use href="#zoomwin"/></svg></button><button><svg><use href="#zoomprev"/></svg></button><i class="sep"></i>
                        <button><svg><use href="#props"/></svg></button><button><svg><use href="#dc"/></svg></button><button><svg><use href="#palette"/></svg></button><button><svg><use href="#sheet"/></svg></button><button><svg><use href="#markup"/></svg></button><button><svg><use href="#calc"/></svg></button><i class="sep"></i>
                        <button><svg><use href="#help"/></svg></button>
                    </div>
                    <div class="bar"><i class="grip"></i>
                        <button><svg><use href="#textstyle"/></svg></button><select class="w-style" aria-label="文字样式"><option>Standard</option></select><i class="sep"></i>
                        <button><svg><use href="#dimstyle"/></svg></button><select class="w-style" aria-label="标注样式"><option>Standard</option></select><i class="sep"></i>
                        <button><svg><use href="#tabstyle"/></svg></button><select class="w-style near" aria-label="表格样式"><option>Standard</option></select><i class="sep"></i>
                        <button><svg><use href="#mlstyle"/></svg></button><select class="w-style" aria-label="多重引线样式"><option>Standard</option></select>
                    </div>
                </div>
                <div class="toolrow">
                    <div class="bar"><i class="grip"></i>
                        <select class="w-ws" aria-label="工作空间"><option>AutoCAD 经典</option></select>
                        <button><svg><use href="#gear"/></svg></button><button><svg><use href="#wsave"/></svg></button>
                    </div>
                    <div class="bar"><i class="grip"></i>
                        <button><svg><use href="#layers"/></svg></button>
                        <div class="layer"><svg><use href="#bulb"/></svg><svg><use href="#sun"/></svg><svg><use href="#vpfreeze"/></svg><svg><use href="#unlock"/></svg><svg><use href="#swatch"/></svg><select aria-label="图层"><option>0</option></select></div>
                        <button><svg><use href="#layerblue"/></svg></button><button><svg><use href="#layerprev"/></svg></button><button><svg><use href="#layers"/></svg></button>
                    </div>
                    <div class="bar props"><i class="grip"></i>
                        <div class="prop p-color"><svg><use href="#swatch"/></svg><select aria-label="颜色"><option>ByLayer</option></select></div><i class="sep"></i>
                        <div class="prop p-ltype"><i class="rule long"></i><select aria-label="线型"><option>ByLayer</option></select></div><i class="sep"></i>
                        <div class="prop p-lwt"><i class="rule"></i><select aria-label="线宽"><option>ByLayer</option></select></div><i class="sep"></i>
                        <div class="prop p-plot"><select aria-label="打印样式"><option>ByColor</option></select></div>
                    </div>
                </div>
            </div>

            <main class="work">
                <aside class="side left">
                    <div class="vbar"><i class="grip"></i>
                        <button><svg><use href="#line"/></svg></button><button><svg><use href="#xline"/></svg></button><button><svg><use href="#pline"/></svg></button><button><svg><use href="#polygon"/></svg></button><button><svg><use href="#rect"/></svg></button><button><svg><use href="#arc"/></svg></button><button><svg><use href="#circle"/></svg></button><button><svg><use href="#revcloud"/></svg></button><button><svg><use href="#spline"/></svg></button><button><svg><use href="#ellipse"/></svg></button><button><svg><use href="#earc"/></svg></button><button><svg><use href="#insert"/></svg></button><button><svg><use href="#mkblock"/></svg></button><button><svg><use href="#point"/></svg></button><button><svg><use href="#hatch"/></svg></button><button><svg><use href="#gradient"/></svg></button><button><svg><use href="#region"/></svg></button><button><svg><use href="#table"/></svg></button><button><svg><use href="#mtext"/></svg></button><button><svg><use href="#addsel"/></svg></button>
                    </div>
                </aside>

                <section class="drawing">
                    <div class="canvas">
                        <svg class="scene" viewBox="41 142 1816 789" preserveAspectRatio="xMinYMin slice">
                            <defs>
                                <linearGradient id="body1" x1="334" x2="549" y1="0" y2="0" gradientUnits="userSpaceOnUse" gradientTransform="rotate(-7 440 540)"><stop offset="0" stop-color="#949fa3"/><stop offset=".3" stop-color="#8c979a"/><stop offset=".48" stop-color="#a3aeb1"/><stop offset=".58" stop-color="#b8c3c6"/><stop offset=".68" stop-color="#98a2a5"/><stop offset=".8" stop-color="#6a7376"/><stop offset="1" stop-color="#71797c"/></linearGradient>
                                <linearGradient id="body2" x1="664" x2="784" y1="0" y2="0" gradientUnits="userSpaceOnUse"><stop offset="0" stop-color="#939fa5"/><stop offset=".4" stop-color="#a9b5ba"/><stop offset="1" stop-color="#a2adae"/></linearGradient>
                                <linearGradient id="body3" x1="1130" x2="1215" y1="0" y2="0" gradientUnits="userSpaceOnUse" gradientTransform="rotate(-8 1170 560)"><stop offset="0" stop-color="#8f9a9d"/><stop offset=".2" stop-color="#b4bfc2"/><stop offset=".4" stop-color="#bcc7ca"/><stop offset=".62" stop-color="#7a8487"/><stop offset=".82" stop-color="#646d70"/><stop offset="1" stop-color="#687174"/></linearGradient>
                                <linearGradient id="fade" x1="0" x2="0" y1="400" y2="710" gradientUnits="userSpaceOnUse"><stop offset="0" stop-color="#7b8487" stop-opacity=".9"/><stop offset=".35" stop-color="#788184" stop-opacity=".7"/><stop offset=".6" stop-color="#a5b0b3" stop-opacity=".05"/><stop offset="1" stop-color="#adb8bb" stop-opacity=".35"/></linearGradient>
                                <radialGradient id="glow"><stop offset="0" stop-color="#f2fafc"/><stop offset=".35" stop-color="#dce8ec" stop-opacity=".8"/><stop offset="1" stop-color="#a8b4b8" stop-opacity="0"/></radialGradient>
                                <radialGradient id="shade"><stop offset="0" stop-color="#586265"/><stop offset="1" stop-color="#788285" stop-opacity="0"/></radialGradient>
                                <clipPath id="c1"><path id="s1" d="M340 408C342 392 385 375 432 375 474 375 497 383 500 395 497 422 492 450 494 473 494 520 518 570 527 600 537 635 548 648 549 665 545 688 490 710 429 710 372 710 334 694 334 662 336 635 355 620 358 597 358 582 352 575 355 562 357 550 366 535 365 522 361 495 350 470 343 442Z"/></clipPath>
                                <clipPath id="c2"><path d="M684 398C694 383 728 374 765 374H800V709H753C705 708 664 696 664 667 664 645 676 618 683 593 690 565 702 540 702 505 700 470 687 435 684 398Z"/></clipPath>
                                <clipPath id="c3"><path d="M1120 390C1170 392 1192 398 1197 412 1190 440 1178 475 1177 513 1178 560 1188 600 1195 623 1205 655 1217 685 1217 702 1214 726 1175 741 1120 741Z"/></clipPath>
                            </defs>
                            <g clip-path="url(#c1)">
                                <path d="M320 360H560V720H320Z" fill="url(#body1)"/><path d="M320 360H560V720H320Z" fill="url(#fade)"/>
                                <ellipse cx="454" cy="535" rx="20" ry="110" fill="url(#glow)" opacity=".7" transform="rotate(-5 454 535)"/>
                                <ellipse cx="372" cy="594" rx="44" ry="18" fill="url(#shade)" opacity=".75"/>
                                <ellipse cx="383" cy="565" rx="36" ry="34" fill="url(#glow)" opacity=".65"/>
                                <ellipse cx="378" cy="655" rx="42" ry="62" fill="url(#glow)"/>
                                <ellipse cx="492" cy="590" rx="26" ry="150" fill="url(#shade)" opacity=".45" transform="rotate(-12 492 590)"/>
                            </g>
                            <ellipse cx="420" cy="398" rx="80" ry="22" fill="#81898c" transform="rotate(-5 420 398)"/>
                            <g clip-path="url(#c2)">
                                <path d="M650 360H800V720H650Z" fill="url(#body2)"/><path d="M650 360H800V720H650Z" fill="url(#fade)"/>
                                <ellipse cx="760" cy="500" rx="60" ry="65" fill="url(#shade)" opacity=".35"/>
                                <ellipse cx="733" cy="575" rx="34" ry="46" fill="url(#glow)" opacity=".6"/>
                            </g>
                            <ellipse cx="764" cy="398" rx="80" ry="23" fill="#81898c" transform="rotate(-3 764 398)"/>
                            <g clip-path="url(#c3)">
                                <path d="M1080 360H1240V750H1080Z" fill="url(#body3)"/>
                                <ellipse cx="1142" cy="445" rx="50" ry="60" fill="url(#shade)" opacity=".8"/>
                            </g>
                            <ellipse cx="1118" cy="413" rx="79" ry="22" fill="#81898c"/>
                            <g fill="none" stroke="#dfe3e4"><ellipse cx="1427" cy="469.500" rx="64" ry="21" transform="rotate(2 1427 469.500)"/><ellipse cx="1442.500" cy="644" rx="109" ry="42" transform="rotate(4 1442.500 644)"/></g>
                            <!-- ucs -->
                            <g stroke-linecap="round" stroke-width="5"><path d="M91 879 85 838" stroke="#4a7fdc"/><path d="M94 878 139 866" stroke="#4fa04e"/><path d="M91 881 104 899" stroke="#c04048"/></g>
                            <g fill="none"><path d="M83 820H95L84 833H96" stroke="#2a52b8"/><path d="M138 849 145 856 151 849M145 856V863" stroke="#37804a"/><path d="M103 883 117 896M117 883 103 896" stroke="#b02a34"/></g>
                            <!-- view cube -->
                            <g transform="translate(1640 130) scale(.3333 .3827)">
                                <ellipse cx="408" cy="329" rx="174" ry="62" fill="none" stroke="#6a7174" stroke-width="34"/>
                                <path d="M288 266 318 258" stroke="#b8bcbe" stroke-width="3"/>
                                <path d="M310 183 425 166 508 195 386 216Z" fill="#c9cbcb"/><path d="M310 183 386 216 388 342 315 298Z" fill="#a9acad"/><path d="M386 216 508 195 507 310 388 342Z" fill="#b6b9ba"/>
                                <path d="M310 183 386 216 508 195M386 216 388 342" fill="none" stroke="#444" stroke-width="3" stroke-dasharray="20 8"/>
                                <path d="M370 188 438 180M375 198 440 190M395 182 398 200M422 180 425 195" fill="none" stroke="#777" stroke-width="3"/>
                            </g>
                            <g class="cube-text"><text x="1747" y="236">前</text><text x="1778" y="241" class="big">右</text></g>
                            <g class="compass"><text x="1711" y="272">南</text><text x="1807" y="281">东</text><text x="1812" y="242">北</text></g>
                        </svg>
                        <div class="vplabel">[−][自定义视图][真实]</div>
                        <button class="wcs">WCS</button>
                        <div class="floatbar"><i class="grip"></i>
                            <button><svg><use href="#polysolid"/></svg></button><button><svg><use href="#box"/></svg></button><button><svg><use href="#wedge"/></svg></button><button><svg><use href="#cone"/></svg></button><button><svg><use href="#sphere"/></svg></button><button><svg><use href="#cyl"/></svg></button><button><svg><use href="#torus"/></svg></button><button><svg><use href="#pyramid"/></svg></button><button><svg><use href="#helix"/></svg></button><button><svg><use href="#planar"/></svg></button><i class="sep"></i>
                            <button><svg><use href="#extrude"/></svg></button><button><svg><use href="#presspull"/></svg></button><button><svg><use href="#sweep"/></svg></button><button><svg><use href="#revolve"/></svg></button><button><svg><use href="#loft"/></svg></button><i class="sep"></i>
                            <button><svg><use href="#union"/></svg></button><button><svg><use href="#subtract"/></svg></button><button><svg><use href="#intersect"/></svg></button><i class="sep"></i>
                            <button><svg><use href="#orbit3d"/></svg></button><button><svg><use href="#rot3d"/></svg></button><button><svg><use href="#align3d"/></svg></button><button><svg><use href="#array3d"/></svg></button>
                            <button class="close" aria-label="关闭">x</button>
                        </div>
                    </div>
                    <div class="vscroll"><svg viewBox="0 0 10 6"><path d="M1 5 5 1 9 5"/></svg><i class="thumb"></i><svg viewBox="0 0 10 6"><path d="M1 1 5 5 9 1"/></svg></div>
                    <div class="tabs">
                        <div class="tabnav"><button><svg viewBox="0 0 10 10"><path d="M2 0V10M9 0V10L4 5Z"/></svg></button><button><svg viewBox="0 0 10 10"><path d="M7 0V10L2 5Z"/></svg></button><button><svg viewBox="0 0 10 10"><path d="M3 0V10L8 5Z"/></svg></button><button><svg viewBox="0 0 10 10"><path d="M8 0V10M1 0V10L6 5Z"/></svg></button></div>
                        <a class="ltab active" href="#">模型</a><a class="ltab" href="#">布局1</a><a class="ltab" href="#">布局2</a>
                        <div class="hscroll"><svg viewBox="0 0 6 10"><path d="M5 1 1 5 5 9"/></svg><i class="thumb"></i><svg viewBox="0 0 6 10"><path d="M1 1 5 5 1 9"/></svg></div>
                    </div>
                </section>

                <aside class="side right">
                    <div class="vbar"><i class="grip"></i>
                        <button><svg><use href="#erase"/></svg></button><button><svg><use href="#cp"/></svg></button><button><svg><use href="#mirror"/></svg></button><button><svg><use href="#offset"/></svg></button><button><svg><use href="#array"/></svg></button><button><svg><use href="#move"/></svg></button><button><svg><use href="#rotate"/></svg></button><button><svg><use href="#scale"/></svg></button><button><svg><use href="#stretch"/></svg></button><button><svg><use href="#trim"/></svg></button><button><svg><use href="#extend"/></svg></button><button><svg><use href="#breakpt"/></svg></button><button><svg><use href="#brk"/></svg></button><button><svg><use href="#join"/></svg></button><button><svg><use href="#chamfer"/></svg></button><button><svg><use href="#fillet"/></svg></button><button><svg><use href="#blend"/></svg></button><button><svg><use href="#explode"/></svg></button>
                    </div>
                    <div class="vbar"><i class="grip"></i>
                        <button><svg><use href="#front"/></svg></button><button><svg><use href="#back"/></svg></button><button><svg><use href="#above"/></svg></button><button><svg><use href="#under"/></svg></button><i class="hsep"></i><button><svg><use href="#anno"/></svg></button><button><svg><use href="#hatchback"/></svg></button>
                    </div>
                </aside>
            </main>

            <section class="command">
                <div class="cmdside"><i class="dots"></i><button aria-label="关闭">×</button><button aria-label="自定义"><svg><use href="#wrench"/></svg></button></div>
                <div class="cmdmain">
                    <div class="history">
                        <p class="first">选中了 2 个横截面</p>
                        <p>输入选项 [导向(G)/路径(P)/仅横截面(C)/设置(S)] &lt;仅横截面&gt;: S</p>
                    </div>
                    <div class="cmdline"><svg><use href="#loft"/></svg><i class="caret small"></i><input type="text" value="LOFT" aria-label="命令"></div>
                </div>
            </section>

            <footer class="status">
                <span class="coords">5036.8441, 12812.8642, 0.0000</span>
                <div class="toggles">
                    <button><svg><use href="#infer"/></svg></button><button><svg><use href="#snap"/></svg></button><button><svg><use href="#grid"/></svg></button><button><svg><use href="#ortho"/></svg></button><button><svg><use href="#polar"/></svg></button><button class="on"><svg><use href="#osnap"/></svg></button><button class="on"><svg><use href="#osnap3"/></svg></button><button class="on"><svg><use href="#otrack"/></svg></button><button class="on"><svg><use href="#ducs"/></svg></button><button><svg><use href="#dyn"/></svg></button><button><svg><use href="#lwt"/></svg></button><button class="on"><svg><use href="#tpy"/></svg></button><button><svg><use href="#qp"/></svg></button><button><svg><use href="#sc"/></svg></button><button><svg><use href="#plus"/></svg></button>
                </div>
                <div class="tools">
                    <button class="model">模型</button><button><svg><use href="#paper"/></svg></button><button><svg><use href="#views"/></svg></button>
                    <button class="scale"><svg><use href="#person"/></svg>1:1</button><button><svg><use href="#personb"/></svg></button><button><svg><use href="#persong"/></svg></button>
                    <i class="gap"></i>
                    <button><svg><use href="#gear"/></svg></button><button><svg><use href="#lock"/></svg></button><button><svg><use href="#isolate"/></svg></button>
                    <button class="bulb"><svg><use href="#bulb"/></svg></button><i class="caret"></i><button><svg><use href="#clean"/></svg></button><i class="resize"></i>
                </div>
            </footer>
        </div>

        <!-- loft settings dialog -->
        <form class="dialog">
            <div class="dlg-title"><svg><use href="#acadTile"/></svg><span>放样设置</span><button type="button" aria-label="关闭"><svg viewBox="0 0 12 12"><path d="M1 1 11 11M11 1 1 11"/></svg></button></div>
            <div class="dlg-body">
                <fieldset>
                    <legend>横截面上的曲面控制</legend>
                    <label class="opt"><input type="radio" name="ctl" checked>直纹(R)</label>
                    <label class="opt smooth"><input type="radio" name="ctl">平滑拟合(F)</label>
                    <div class="pair">
                        <label for="sc1">起点连续性(S):</label><label for="sb1">起点凸度幅值(T):</label>
                        <select id="sc1" disabled><option>G0</option></select><input class="short" type="text" id="sb1" value="0.0000" disabled>
                        <label for="ec1">端点连续性(O):</label><label for="eb1">端点凸度幅值(U):</label>
                        <select id="ec1" disabled><option>G0</option></select><input class="short" type="text" id="eb1" value="0.0000" disabled>
                    </div>
                    <label class="opt"><input type="radio" name="ctl">法线指向(N):</label>
                    <select class="normal" aria-label="法线指向" disabled><option>所有横截面</option></select>
                    <label class="opt"><input type="radio" name="ctl">拔模斜度(D)</label>
                    <div class="pair draft">
                        <label for="sa">起点角度(S):</label><label for="sm">起点幅值(T):</label>
                        <input type="text" id="sa" value="90" disabled><input type="text" id="sm" value="0.0000" disabled>
                        <label for="ea">端点角度(E):</label><label for="em">端点幅值(M):</label>
                        <input type="text" id="ea" value="90" disabled><input type="text" id="em" value="0.0000" disabled>
                    </div>
                    <label class="opt off"><input type="checkbox" disabled>闭合曲面或实体(C)</label>
                    <label class="opt off sub"><input type="checkbox" disabled>周期(平滑端点)(P)</label>
                </fieldset>
                <div class="dlg-btns"><button type="button" class="default">确定</button><button type="button">取消</button><button type="button">帮助(H)</button></div>
            </div>
            <div class="tip">指定实体或曲面在横截面之间是直纹（直的），并且在横截面处具有鲜明边界。（LOFTNORMALS 系统变量）</div>
            <svg class="cursor" viewBox="0 0 12 19"><path d="M.500.500V16L4 12.500 6.500 18 8.500 17 6 11.500H11Z"/></svg>
        </form>

        <div class="watermark">
            <div class="wm-name"><span>搜</span><span>狐</span><b>视频</b></div>
            <div class="wm-url">tv.sohu.com</div>
        </div>
        <div class="brand"><span>元</span><span>旭</span><span>教</span><span>育</span></div>
        <i class="bg-teal"></i><i class="bg-red"></i>
    </div>

    <nav class="taskbar">
        <button><svg class="win"><use href="#win"/></svg></button>
        <button><svg><use href="#tview"/></svg></button>
        <button><svg><use href="#edge"/></svg></button>
        <button class="run"><svg><use href="#folder"/></svg></button>
        <button><svg><use href="#store"/></svg></button>
        <button class="run"><svg><use href="#browser"/></svg></button>
        <button class="run active"><svg><use href="#acadTile"/></svg></button>
        <button class="run"><svg><use href="#clap"/></svg></button>
        <div class="tray">
            <button><svg><use href="#up"/></svg></button><button><svg><use href="#wifi"/></svg></button><button><svg><use href="#vol"/></svg></button><button><svg><use href="#notif"/></svg></button><button class="ime">英</button><button class="sg"><svg><use href="#sogou"/></svg></button>
        </div>
    </nav>
</body>

</html>
```
FILE: styles.css
```
* {
    box-sizing: border-box;
}

html,
body {
    height: 100%;
}

body {
    margin: 0;
    display: flex;
    flex-direction: column;
    overflow: hidden;
    background-color: #d8d8d8;
    font-family: "Noto Sans", "Noto Sans CJK SC", sans-serif;
    font-size: 12px;
    color: #111;
}

button,
select,
input {
    font: inherit;
    color: inherit;
    margin: 0;
}

button {
    padding: 0;
    border: 0;
    background: none;
    display: flex;
    align-items: center;
    justify-content: center;
    flex: none;
}

a {
    color: inherit;
    text-decoration: none;
}

svg {
    width: 16px;
    height: 16px;
    fill: none;
    stroke: #3c3c3c;
    flex: none;
    display: block;
}

select {
    appearance: none;
    border: 0;
    border-radius: 0;
    background: none;
}

select:disabled,
input:disabled {
    opacity: 1;
}

.sprite {
    position: absolute;
    width: 0;
    height: 0;
}

.dim {
    opacity: .55;
}

.caret {
    width: 0;
    height: 0;
    flex: none;
    border: 4px solid transparent;
    border-top: 5px solid #222;
    border-bottom: 0;
}

.caret.small {
    border-width: 3px;
    border-top-width: 3px;
    border-bottom: 0;
}

.caret.right {
    border: 5px solid transparent;
    border-left: 5px solid #000;
    border-right: 0;
}

/* ---- frame ---- */

.desktop {
    flex: 1;
    min-height: 0;
    position: relative;
    padding: 4px 10px 7px;
    display: flex;
    background: linear-gradient(90deg, #f2f2f2 0 9px, #d4d4d4 9px calc(100% - 10px), #e4e4e4 calc(100% - 9px));
}

.app {
    flex: 1;
    min-width: 0;
    display: flex;
    flex-direction: column;
    background-color: #666;
    box-shadow: 0 0 3px #777;
}

.bg-teal,
.bg-red {
    position: absolute;
    top: 0;
    left: 819px;
    width: 230px;
    height: 3px;
    background-color: #38a5bd;
}

.bg-red {
    left: auto;
    right: 0;
    width: 10px;
    height: 20px;
    background-color: #e04a4e;
}

/* ---- title + menu ---- */

.top {
    display: grid;
    grid-template-columns: 40px 1fr;
    grid-template-rows: 30px 21px;
}

.logo {
    grid-area: 1 / 1 / 3 / 2;
    z-index: 1;
    margin: 6px 0 4px;
    border: 1px solid #222;
    background: linear-gradient(#c8c8c8, #7c7c7c);
}

.logo svg {
    width: 26px;
    height: 30px;
}

.titlebar {
    grid-area: 1 / 1 / 2 / 3;
    display: flex;
    align-items: flex-end;
    justify-content: space-between;
    background-color: #fff;
    border-bottom: 1px solid #333;
    padding-left: 40px;
}

.qat {
    display: flex;
    align-items: center;
    height: 24px;
    width: 394px;
    padding-left: 5px;
    background: linear-gradient(#999, #828282);
    border: 1px solid #777;
}

.qat button {
    width: 24px;
}

.qat-ws {
    flex: 1;
    display: flex;
    align-items: center;
    gap: 3px;
    height: 22px;
    margin-left: 9px;
    padding: 0 3px;
    background: linear-gradient(#dcdcdc, #c0c0c0);
    color: #555;
}

.qat-ws select {
    flex: 1;
}

.qat .qat-more {
    width: 16px;
    height: 22px;
    border-left: 1px solid #555;
}

h1 {
    flex: 1;
    margin: 0;
    padding-left: 304px;
    display: flex;
    gap: 18px;
    font-size: 13px;
    font-weight: normal;
    line-height: 28px;
}

.info {
    display: flex;
    align-items: center;
    height: 24px;
    width: 445px;
    padding-right: 4px;
    background: linear-gradient(#9a9a9a, #808080);
    border: 1px solid #666;
}

.info-arrow {
    width: 14px;
}

.info input {
    width: 179px;
    height: 22px;
    border: 0;
    padding: 0 3px;
    background-color: #f2f2f2;
    font-style: italic;
}

.info input::placeholder {
    color: #555;
}

.info button {
    margin-left: 4px;
}

.info .info-arrow {
    margin-left: 0;
}

.info .login {
    gap: 5px;
    margin: 0 auto 0 8px;
    color: #fff;
}

.info button + .caret {
    margin-left: 6px;
}

.info .caret + button {
    margin-left: 10px;
}

.info .caret + .info-help {
    margin-left: 20px;
}

.winbtns {
    display: flex;
    width: 163px;
    height: 24px;
    justify-content: space-around;
    padding: 0 0 6px 26px;
}

.winbtns svg,
.dlg-title button svg {
    width: 12px;
    height: 12px;
    stroke: #666;
}

.menubar {
    grid-area: 2 / 1 / 3 / 3;
    display: flex;
    align-items: center;
    gap: 25px;
    padding: 0 4px 0 56px;
    line-height: 18px;
    color: #fff;
    background: linear-gradient(#9a9a9a, #5a5a5a);
}

.mdi {
    width: 40px;
    height: 12px;
    margin-left: auto;
    stroke: #111;
    stroke-width: 2;
}

/* ---- file tabs ---- */

.filetabs {
    display: flex;
    height: 27px;
    padding: 4px 0 0 22px;
    background: linear-gradient(#a2a2a2, #8c8c8c);
    border-bottom: 1px solid #b0b0b0;
    font-size: 12px;
    line-height: 22px;
}

.ftab {
    width: 132px;
    padding-left: 10px;
    color: #4a4a4a;
    background: linear-gradient(#adadad, #999);
    clip-path: polygon(0 100%, 6px 0, 100% 0, calc(100% - 10px) 100%);
}

.ftab.active {
    width: 128px;
    margin-left: -10px;
    padding: 0 18px 0 11px;
    display: flex;
    justify-content: space-between;
    color: #000;
    background: linear-gradient(#cacaca, #a4a4a4);
    clip-path: polygon(0 100%, 8px 0, 116px 0, 100% 100%);
}

.ftab .x {
    color: #555;
}

.newtab svg {
    width: 24px;
    height: 16px;
    fill: #858585;
    stroke: #555;
}

/* ---- toolbars ---- */

.toolrows {
    display: flex;
    flex-direction: column;
    gap: 4px;
    padding: 4px 0 5px;
    border-bottom: 1px solid #a6a6a6;
}

.toolrow {
    display: flex;
    gap: 4px;
}

.toolrow:first-child {
    gap: 0;
}

.bar {
    display: flex;
    align-items: stretch;
    height: 23px;
    background-color: #e9e9e9;
    border: solid #333;
    border-width: 1px 1px 1px 0;
}

.bar button,
.floatbar button {
    width: 23px;
}

.grip {
    width: 9px;
    flex: none;
    background: repeating-linear-gradient(#2c2c2c 0 1px, #777 1px 3px);
    border: solid #555;
    border-width: 0 3px 0 2px;
}

.sep {
    width: 6px;
    flex: none;
    background: linear-gradient(#777, #777) 2px 2px / 1px 18px no-repeat;
}

.floatbar .sep {
    width: 5px;
}

.drop {
    width: 13px;
    display: flex;
    align-items: center;
    justify-content: center;
}

.drop::after {
    content: "";
    border: 3px solid transparent;
    border-top-color: #888;
    border-bottom: 0;
}

.bar select {
    color: #666;
}

.bar > select,
.layer,
.prop {
    background: #cacaca url("data:image/svg+xml,%3Csvg xmlns='http://www.w3.org/2000/svg' width='8' height='5'%3E%3Cpath d='M1 1 4 4 7 1' fill='none' stroke='%23a4a4a4'/%3E%3C/svg%3E") right 4px center no-repeat;
}

.w-style {
    width: 121px;
    padding: 0 0 0 20px;
}

.w-style.near {
    width: 117px;
    padding-left: 5px;
}

.w-ws {
    width: 175px;
    padding: 0 0 0 9px;
    margin-right: 1px;
}

.layer {
    display: flex;
    align-items: center;
    width: 294px;
    padding-left: 1px;
    gap: 1px;
}

.layer svg {
    width: 15px;
    height: 15px;
}

.layer select {
    flex: 1;
    padding-left: 0;
}

.prop {
    display: flex;
    align-items: center;
    padding-left: 4px;
}

.prop select {
    flex: 1;
    font-family: "Liberation Mono", monospace;
    font-size: 10px;
}

.p-color {
    width: 149px;
}

.p-ltype {
    width: 162px;
}

.p-lwt {
    width: 125px;
}

.p-plot {
    width: 116px;
}

.rule {
    width: 34px;
    height: 1px;
    margin-right: 4px;
    background-color: #111;
}

.rule.long {
    width: 60px;
}

/* ---- work area ---- */

.work {
    flex: 1;
    min-height: 0;
    display: flex;
    margin-bottom: 4px;
}

.side {
    width: 29px;
    padding-left: 1px;
}

.side.right {
    width: 32px;
    padding-left: 4px;
}

.vbar {
    width: 23px;
    border: 1px solid #333;
    background-color: #e9e9e9;
    margin-bottom: 1px;
}

.side.right .vbar {
    width: 25px;
}

.vbar .grip {
    display: block;
    width: auto;
    height: 7px;
    border-width: 2px 3px;
    background: repeating-linear-gradient(90deg, #2c2c2c 0 1px, #777 1px 3px);
}

.vbar button {
    width: 100%;
    height: 22px;
}

.hsep {
    display: block;
    height: 1px;
    margin: 2px;
    background-color: #999;
}

.drawing {
    flex: 1;
    min-width: 0;
    display: grid;
    grid-template-columns: 1fr 21px;
    grid-template-rows: 1fr 17px;
    border-left: 2px solid #9c9c9c;
}

.canvas {
    position: relative;
    overflow: hidden;
    background: linear-gradient(#586063, #4b5155 10%, #41464a 25%, #3a3f42 45%, #2f3436 70%, #272b2d);
}

.scene {
    position: absolute;
    inset: 0;
    width: 100%;
    height: 100%;
    stroke: none;
}

.cube-text {
    fill: #4a4e50;
    font-family: "Noto Sans CJK SC", sans-serif;
    font-size: 17px;
}

.cube-text .big {
    font-size: 22px;
}

.compass {
    fill: #aab0b2;
    font-size: 14px;
}

.vplabel {
    position: absolute;
    left: 4px;
    top: 5px;
    color: #fff;
    line-height: 18px;
}

.wcs {
    position: absolute;
    right: 57px;
    top: 170px;
    width: 48px;
    height: 18px;
    padding-left: 5px;
    justify-content: flex-start;
    border: 1px solid #8d9294;
    border-radius: 3px;
    background-color: #a4a9ab;
    color: #4a5052;
    font-size: 11px;
}

.floatbar {
    position: absolute;
    left: 115px;
    top: 56px;
    height: 24px;
    display: flex;
    border: 1px solid #333;
    background-color: #e9e9e9;
}

.floatbar .close {
    width: 8px;
    align-items: flex-start;
    background-color: #555;
    color: #fff;
    font-size: 10px;
    line-height: 10px;
}

.vscroll,
.hscroll {
    display: flex;
    align-items: center;
    justify-content: space-between;
    background-color: #f0f0f1;
}

.vscroll {
    flex-direction: column;
    padding: 7px 0;
    border: solid #fff;
    border-width: 0 3px 0 2px;
}

.vscroll svg,
.hscroll svg {
    width: 10px;
    height: 6px;
    stroke: #444;
    stroke-width: 2;
}

.vscroll .thumb {
    width: 15px;
    height: 17px;
    margin-bottom: 332px;
    background-color: #cdcdcd;
}

.hscroll {
    flex: none;
    width: 35%;
    margin-left: auto;
    padding: 0 24px 0 8px;
    border-left: 6px solid #c8c8c8;
}

.hscroll svg {
    width: 6px;
    height: 10px;
}

.hscroll .thumb {
    width: 17px;
    height: 13px;
    margin-left: auto;
    margin-right: 166px;
    background-color: #cdcdcd;
}

.tabs {
    grid-column: 1 / 3;
    display: flex;
    background-color: #f0f1f1;
    border-bottom: 2px solid #fff;
}

.tabnav {
    display: flex;
}

.tabnav button {
    width: 14px;
    border-right: 1px solid #bbb;
}

.tabnav svg {
    width: 8px;
    height: 10px;
    fill: #555;
    stroke: #555;
}

.ltab {
    position: relative;
    padding: 0 5px 0 10px;
    line-height: 15px;
}

.ltab.active {
    background-color: #fff;
}

.ltab::after,
.ltab.active::before {
    content: "";
    position: absolute;
    right: -4px;
    top: 0;
    height: 15px;
    border-right: 1px solid #333;
    transform: skewX(-22deg);
}

.ltab.active::before {
    right: auto;
    left: 3px;
    transform: skewX(22deg);
}

/* ---- command line ---- */

.command {
    display: flex;
    height: 58px;
    border-bottom: 2px solid #111;
}

.cmdside {
    width: 23px;
    display: flex;
    flex-direction: column;
    align-items: center;
    justify-content: space-between;
    padding: 4px 0;
    background: linear-gradient(#999, #444);
    color: #fff;
}

.cmdside button {
    font-size: 18px;
    font-weight: bold;
    line-height: 14px;
}

.cmdside svg {
    width: 14px;
    height: 14px;
}

.dots {
    width: 16px;
    height: 8px;
    background: repeating-linear-gradient(90deg, #aaa 0 1px, #777 1px 3px);
}

.cmdmain {
    flex: 1;
    display: flex;
    flex-direction: column;
}

.history {
    height: 34px;
    padding: 2px 3px;
    background-color: #c6c6c6;
    border-bottom: 1px solid #777;
    font-family: "DejaVu Sans Mono", "Noto Sans CJK SC", monospace;
    font-size: 12px;
    line-height: 15px;
}

.history p {
    margin: 0;
}

.history .first {
    padding-left: 7px;
}

.cmdline {
    flex: 1;
    display: flex;
    align-items: center;
    padding-left: 5px;
    gap: 4px;
    background-color: #fff;
}

.cmdline input {
    flex: 1;
    border: 0;
    padding: 0 2px;
    background: none;
    font-family: "DejaVu Sans Mono", monospace;
    font-size: 12px;
}

/* ---- status bar ---- */

.status {
    display: flex;
    height: 23px;
    background: linear-gradient(#6e6e6e, #939393);
}

.coords {
    width: 238px;
    padding-left: 18px;
    line-height: 23px;
    font-size: 11px;
    color: #8e8e8e;
}

.toggles,
.tools {
    display: flex;
    background: linear-gradient(#bcbcbc, #a4a4a4);
}

.toggles button,
.tools button {
    width: 22px;
    border-right: 1px solid #888;
}

.toggles .on {
    background: linear-gradient(#d6eef8, #92cbe4);
}

.tools {
    margin-left: auto;
    align-items: stretch;
}

.tools .model {
    width: 30px;
}

.tools .scale {
    width: 58px;
    padding-left: 16px;
    background-color: #868686;
}

.tools .gap {
    width: 6px;
    background-color: #666;
}

.tools .bulb {
    width: 34px;
    border: 2px solid #777;
    background-color: #8a8a8a;
}

.tools .caret {
    margin: 10px 2px;
}

.resize {
    width: 18px;
    background: #777 radial-gradient(#ddd 1px, transparent 1px) 0 0 / 4px 4px;
    clip-path: polygon(100% 20%, 100% 100%, 0 100%);
}

/* ---- dialog ---- */

.dialog {
    position: absolute;
    left: 784px;
    top: 294px;
    width: 353px;
    border: 1px solid #dca592;
    background-color: #f0f0f0;
    box-shadow: 2px 4px 12px rgba(0, 0, 0, .5);
}

.dlg-title {
    display: flex;
    align-items: center;
    gap: 5px;
    height: 24px;
    padding: 0 9px 0 3px;
    background-color: #fff;
}

.dlg-title button {
    margin-left: auto;
}

.dlg-title button svg {
    stroke: #111;
}

.dlg-body {
    padding: 15px 10px 14px 12px;
}

fieldset {
    margin: 0;
    padding: 5px 10px 9px 17px;
    border: 1px solid #dcdcdc;
}

legend {
    margin-left: -10px;
    padding: 0 4px 0 1px;
    line-height: 16px;
}

.opt {
    display: flex;
    align-items: center;
    gap: 3px;
    line-height: 18px;
}

.opt input {
    flex: none;
    appearance: none;
    width: 13px;
    height: 13px;
    border: 1px solid #333;
    background-color: #fff;
}

.opt input[type="radio"] {
    border-radius: 50%;
}

.opt input:checked {
    border-color: #0a64b4;
    background: radial-gradient(#0a64b4 0 3px, #fff 4px);
}

.opt.smooth {
    margin: 8px 0 0;
}

.opt.off {
    color: #777;
}

.opt.off input {
    border-color: #ccc;
}

.opt.sub {
    margin-left: 21px;
}

.pair {
    display: grid;
    grid-template-columns: 137px 1fr;
    justify-items: start;
    margin: 0 0 8px 26px;
    row-gap: 2px;
    line-height: 19px;
}

.pair input,
.pair select {
    width: 95px;
    height: 20px;
    padding: 0 2px;
    border: 1px solid #ccc;
    background-color: #f0f0f0;
    color: #777;
    font-family: "Liberation Mono", monospace;
    font-size: 10px;
}

.pair select {
    width: 72px;
    margin-left: 2px;
    background: #f0f0f0 url("data:image/svg+xml,%3Csvg xmlns='http://www.w3.org/2000/svg' width='20' height='20'%3E%3Cpath d='M0 0H20V20H0Z' fill='%23fff'/%3E%3Cpath d='M7 8 11 12 15 8' fill='none' stroke='%23999'/%3E%3C/svg%3E") right center no-repeat;
}

.pair .short {
    width: 60px;
}

.normal {
    display: block;
    width: 236px;
    height: 20px;
    margin: 0 0 7px 16px;
    padding: 0 4px;
    background: #c8c8c8 url("data:image/svg+xml,%3Csvg xmlns='http://www.w3.org/2000/svg' width='8' height='5'%3E%3Cpath d='M1 1 4 4 7 1' fill='none' stroke='%23aaa'/%3E%3C/svg%3E") right 4px center no-repeat;
    color: #777;
}

.draft {
    margin-bottom: 12px;
}

.dlg-btns {
    display: flex;
    justify-content: flex-end;
    gap: 12px;
    margin-top: 15px;
}

.dlg-btns button {
    width: 73px;
    height: 20px;
    border: 1px solid #adadad;
    background-color: #e1e1e1;
}

.dlg-btns .default {
    border: 2px solid #0a6abf;
}

.tip {
    position: absolute;
    left: 35px;
    top: 91px;
    width: 365px;
    padding: 7px 7px 9px;
    border: 1px solid #666;
    background-color: #f2f2f7;
    color: #555;
    font-family: "Noto Sans", "Noto Sans CJK SC", sans-serif;
    line-height: 17px;
    text-spacing-trim: space-all;
}

.cursor {
    position: absolute;
    left: 35px;
    top: 71px;
    width: 12px;
    height: 19px;
    fill: #fff;
    stroke: #111;
}

/* ---- overlays ---- */

.watermark {
    position: absolute;
    right: 78px;
    top: 47px;
    width: 250px;
    color: rgba(225, 225, 225, .68);
}

.wm-name {
    display: flex;
    justify-content: space-between;
    font-family: "Noto Sans CJK SC", sans-serif;
    font-size: 54px;
    font-weight: 700;
    line-height: 60px;
}

.wm-name b {
    width: 122px;
    border-radius: 6px;
    background-color: rgba(225, 225, 225, .68);
    color: #777;
    text-align: center;
}

.wm-url {
    margin-top: 5px;
    font-family: "DejaVu Sans", sans-serif;
    font-size: 41px;
    line-height: 44px;
    white-space: nowrap;
}

.brand {
    position: absolute;
    right: 30px;
    top: 23px;
    width: 130px;
    display: flex;
    justify-content: space-between;
    font-size: 25px;
    font-weight: 900;
    line-height: 28px;
    color: #f00;
}

/* ---- taskbar ---- */

.taskbar {
    display: flex;
    height: 40px;
    background: linear-gradient(90deg, #000, #060302 60%, #100402);
}

.taskbar button {
    width: 49px;
}

.taskbar svg {
    width: 22px;
    height: 22px;
}

.taskbar .win {
    width: 16px;
    height: 16px;
}

.taskbar .run {
    border: solid transparent;
    border-width: 0 4px;
    box-shadow: inset 0 -2px #f2c0ae;
    background-clip: padding-box;
}

.taskbar .run.active {
    border-width: 0 1px;
    background-color: #443c3a;
}

.tray {
    margin-left: auto;
    display: flex;
    padding-right: 9px;
}

.taskbar .tray button {
    width: 24px;
}

.taskbar .tray .sg {
    width: 30px;
}

.tray svg {
    width: 16px;
    height: 16px;
}

.tray .ime {
    color: #ccc;
    font-size: 14px;
}
```
